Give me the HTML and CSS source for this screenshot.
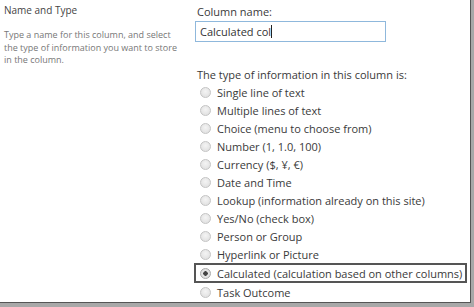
FILE: index.html
```html
<!DOCTYPE html>
<html>
<head>
<meta charset="utf-8">
<link rel="stylesheet" href="styles.css">
</head>
<body>
<div class="frame">
  <div class="section">
    <div class="left">
      <div class="title">Name and Type</div>
      <div class="desc">Type a name for this column, and select the type of information you want to store in the column.</div>
    </div>
    <div class="right">
      <div class="label">Column name:</div>
      <div class="input"><span>Calculated col</span><span class="caret"></span></div>
      <div class="label type-label">The type of information in this column is:</div>
      <ul class="options">
        <li class="opt"><span class="radio"></span>Single line of text</li>
        <li class="opt"><span class="radio"></span>Multiple lines of text</li>
        <li class="opt"><span class="radio"></span>Choice (menu to choose from)</li>
        <li class="opt"><span class="radio"></span>Number (1, 1.0, 100)</li>
        <li class="opt"><span class="radio"></span>Currency ($, ¥, €)</li>
        <li class="opt"><span class="radio"></span>Date and Time</li>
        <li class="opt"><span class="radio"></span>Lookup (information already on this site)</li>
        <li class="opt"><span class="radio"></span>Yes/No (check box)</li>
        <li class="opt"><span class="radio"></span>Person or Group</li>
        <li class="opt"><span class="radio"></span>Hyperlink or Picture</li>
        <li class="opt selected"><span class="radio checked"></span>Calculated (calculation based on other columns)</li>
        <li class="opt"><span class="radio"></span>Task Outcome</li>
      </ul>
    </div>
  </div>
</div>
</body>
</html>
```

FILE: styles.css
```css
html, body {
  margin: 0;
  padding: 0;
  background: #a8a8a8;
  width: 474px;
  height: 307px;
  overflow: hidden;
}

.frame {
  width: 470px;
  height: 302px;
  background: #fff;
  border-right: 1px solid #555;
  border-bottom: 1px solid #555;
  overflow: hidden;
  font-family: "Open Sans", "Noto Sans", sans-serif;
  color: #444;
}

.section {
  display: flex;
}

.left {
  width: 191px;
  padding: 3px 0 0 4px;
  box-sizing: border-box;
}

.title {
  font-size: 10px;
  line-height: 14px;
  color: #444;
}

.desc {
  margin-top: 12px;
  font-size: 9px;
  line-height: 12.5px;
  color: #777;
  width: 175px;
}

.right {
  flex: 1;
  padding-top: 4px;
}

.label {
  font-size: 11px;
  line-height: 16px;
  padding-left: 6px;
  color: #3a3a3a;
  white-space: nowrap;
}

.input {
  margin: 1px 0 0 4px;
  width: 191px;
  height: 21px;
  border: 1px solid #8fb8dc;
  box-sizing: border-box;
  font-size: 11px;
  padding-left: 4px;
  color: #333;
  display: flex;
  align-items: center;
}

.caret {
  display: inline-block;
  width: 1px;
  height: 13px;
  background: #222;
}

.type-label {
  margin-top: 25px;
}

.options {
  list-style: none;
  margin: 0;
  padding: 0;
}

.opt {
  display: flex;
  align-items: center;
  height: 18px;
  font-size: 11px;
  padding-left: 9px;
  color: #3a3a3a;
  box-sizing: border-box;
  white-space: nowrap;
}

.opt.selected {
  margin: 0 3px;
  border: 2px solid #555;
  padding-left: 4px;
  height: 20px;
}

.radio {
  width: 9px;
  height: 9px;
  border-radius: 50%;
  border: 1px solid #c4c4c4;
  background: radial-gradient(circle at 50% 40%, #f4f4f4 0%, #dcdcdc 100%);
  margin-right: 6px;
  flex: none;
}

.radio.checked {
  background: radial-gradient(circle, #444 0, #444 2px, #e6e6e6 2.5px, #d8d8d8 100%);
  border-color: #aaa;
}
```
